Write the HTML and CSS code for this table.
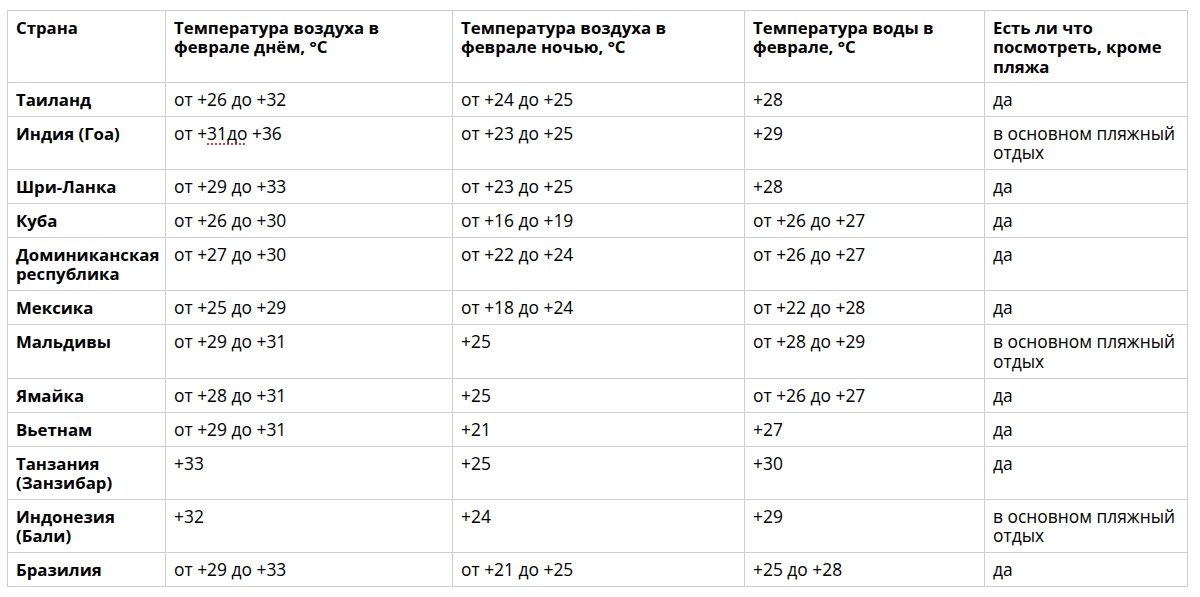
FILE: index.html
```html
<!DOCTYPE html>
<html lang="ru">
<head>
<meta charset="utf-8">
<link rel="stylesheet" href="styles.css">
</head>
<body>
<table class="tbl">
<colgroup>
<col class="c1"><col class="c2"><col class="c3"><col class="c4"><col class="c5">
</colgroup>
<thead>
<tr><th>Страна</th><th>Температура воздуха в феврале днём, °C</th><th>Температура воздуха в феврале ночью, °C</th><th>Температура воды в феврале, °C</th><th>Есть ли что посмотреть, кроме пляжа</th></tr>
</thead>
<tbody>
<tr><th>Таиланд</th><td>от +26 до +32</td><td>от +24 до +25</td><td>+28</td><td>да</td></tr>
<tr><th>Индия (Гоа)</th><td>от +<span class="spell">31до</span> +36</td><td>от +23 до +25</td><td>+29</td><td>в основном пляжный отдых</td></tr>
<tr><th>Шри-Ланка</th><td>от +29 до +33</td><td>от +23 до +25</td><td>+28</td><td>да</td></tr>
<tr><th>Куба</th><td>от +26 до +30</td><td>от +16 до +19</td><td>от +26 до +27</td><td>да</td></tr>
<tr><th>Доминиканская республика</th><td>от +27 до +30</td><td>от +22 до +24</td><td>от +26 до +27</td><td>да</td></tr>
<tr><th>Мексика</th><td>от +25 до +29</td><td>от +18 до +24</td><td>от +22 до +28</td><td>да</td></tr>
<tr><th>Мальдивы</th><td>от +29 до +31</td><td>+25</td><td>от +28 до +29</td><td>в основном пляжный отдых</td></tr>
<tr><th>Ямайка</th><td>от +28 до +31</td><td>+25</td><td>от +26 до +27</td><td>да</td></tr>
<tr><th>Вьетнам</th><td>от +29 до +31</td><td>+21</td><td>+27</td><td>да</td></tr>
<tr><th>Танзания (Занзибар)</th><td>+33</td><td>+25</td><td>+30</td><td>да</td></tr>
<tr><th>Индонезия (Бали)</th><td>+32</td><td>+24</td><td>+29</td><td>в основном пляжный отдых</td></tr>
<tr><th>Бразилия</th><td>от +29 до +33</td><td>от +21 до +25</td><td>+25 до +28</td><td>да</td></tr>
</tbody>
</table>
</body>
</html>
```
FILE: styles.css
```css
html, body {
  margin: 0;
  padding: 0;
  background: #fff;
}
body {
  padding: 10px 0 0 7px;
  font-family: "Open Sans", "Noto Sans", sans-serif;
  color: #000;
}
.tbl {
  border-collapse: collapse;
  table-layout: fixed;
  width: 1180px;
  line-height: 19.2px;
}
.c1 { width: 158px; }
.c2 { width: 287px; }
.c3 { width: 292px; }
.c4 { width: 240px; }
.c5 { width: 203px; }
.tbl th, .tbl td {
  border: 1px solid #cfcfcf;
  padding: 7px 8px 6.8px 8px;
  text-align: left;
  vertical-align: top;
}
.tbl th {
  font-weight: 700;
  font-size: 16.8px;
}
.tbl td {
  font-weight: 400;
  font-size: 17.4px;
}
.tbl thead th {
  padding-top: 6.5px;
  padding-bottom: 6px;
  line-height: 19.5px;
}
.spell {
  text-decoration: underline dotted #e53935;
  text-decoration-thickness: 2px;
  text-underline-offset: 3px;
}
```
